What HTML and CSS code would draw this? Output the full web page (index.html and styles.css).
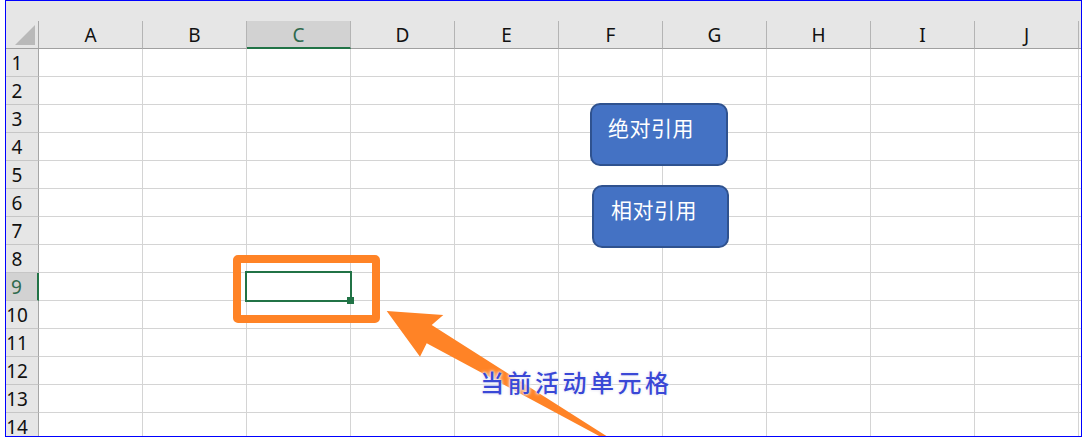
FILE: index.html
```html
<!DOCTYPE html>
<html lang="zh-CN">
<head>
<meta charset="utf-8">
<title>当前活动单元格</title>
<link rel="stylesheet" href="styles.css">
</head>
<body>
<div class="frame">
  <div class="strip"></div>
  <div class="sheet">
    <div class="corner"><svg width="32" height="27" viewBox="0 0 32 27"><polygon points="9,24 29,24 29,4" fill="#b9b9b9"/></svg></div>
    <div class="ch">A</div><div class="ch">B</div><div class="ch sel">C</div><div class="ch">D</div><div class="ch">E</div><div class="ch">F</div><div class="ch">G</div><div class="ch">H</div><div class="ch">I</div><div class="ch">J</div><div class="ch edge"></div>

    <div class="rh">1</div><div class="c"></div><div class="c"></div><div class="c"></div><div class="c"></div><div class="c"></div><div class="c"></div><div class="c"></div><div class="c"></div><div class="c"></div><div class="c"></div><div class="e"></div>
    <div class="rh">2</div><div class="c"></div><div class="c"></div><div class="c"></div><div class="c"></div><div class="c"></div><div class="c"></div><div class="c"></div><div class="c"></div><div class="c"></div><div class="c"></div><div class="e"></div>
    <div class="rh">3</div><div class="c"></div><div class="c"></div><div class="c"></div><div class="c"></div><div class="c"></div><div class="c"></div><div class="c"></div><div class="c"></div><div class="c"></div><div class="c"></div><div class="e"></div>
    <div class="rh">4</div><div class="c"></div><div class="c"></div><div class="c"></div><div class="c"></div><div class="c"></div><div class="c"></div><div class="c"></div><div class="c"></div><div class="c"></div><div class="c"></div><div class="e"></div>
    <div class="rh">5</div><div class="c"></div><div class="c"></div><div class="c"></div><div class="c"></div><div class="c"></div><div class="c"></div><div class="c"></div><div class="c"></div><div class="c"></div><div class="c"></div><div class="e"></div>
    <div class="rh">6</div><div class="c"></div><div class="c"></div><div class="c"></div><div class="c"></div><div class="c"></div><div class="c"></div><div class="c"></div><div class="c"></div><div class="c"></div><div class="c"></div><div class="e"></div>
    <div class="rh">7</div><div class="c"></div><div class="c"></div><div class="c"></div><div class="c"></div><div class="c"></div><div class="c"></div><div class="c"></div><div class="c"></div><div class="c"></div><div class="c"></div><div class="e"></div>
    <div class="rh">8</div><div class="c"></div><div class="c"></div><div class="c"></div><div class="c"></div><div class="c"></div><div class="c"></div><div class="c"></div><div class="c"></div><div class="c"></div><div class="c"></div><div class="e"></div>
    <div class="rh sel">9</div><div class="c"></div><div class="c"></div><div class="c"></div><div class="c"></div><div class="c"></div><div class="c"></div><div class="c"></div><div class="c"></div><div class="c"></div><div class="c"></div><div class="e"></div>
    <div class="rh">10</div><div class="c"></div><div class="c"></div><div class="c"></div><div class="c"></div><div class="c"></div><div class="c"></div><div class="c"></div><div class="c"></div><div class="c"></div><div class="c"></div><div class="e"></div>
    <div class="rh">11</div><div class="c"></div><div class="c"></div><div class="c"></div><div class="c"></div><div class="c"></div><div class="c"></div><div class="c"></div><div class="c"></div><div class="c"></div><div class="c"></div><div class="e"></div>
    <div class="rh">12</div><div class="c"></div><div class="c"></div><div class="c"></div><div class="c"></div><div class="c"></div><div class="c"></div><div class="c"></div><div class="c"></div><div class="c"></div><div class="c"></div><div class="e"></div>
    <div class="rh">13</div><div class="c"></div><div class="c"></div><div class="c"></div><div class="c"></div><div class="c"></div><div class="c"></div><div class="c"></div><div class="c"></div><div class="c"></div><div class="c"></div><div class="e"></div>
    <div class="rh">14</div><div class="c"></div><div class="c"></div><div class="c"></div><div class="c"></div><div class="c"></div><div class="c"></div><div class="c"></div><div class="c"></div><div class="c"></div><div class="c"></div><div class="e"></div>
  </div>

  <div class="active"></div>
  <div class="handle"></div>
  <div class="highlight"></div>

  <div class="shape shape-abs">绝对引用</div>
  <div class="shape shape-rel">相对引用</div>

  <svg class="arrow" width="1091" height="442" viewBox="0 0 1091 442">
    <polygon points="386.7,311 443.3,315 431.7,325 608,437 601,437 426.7,343.3 420,356.7" fill="#ff8326"/>
  </svg>

  <div class="label">当前活动单元格</div>
</div>
</body>
</html>
```

FILE: styles.css
```css
* { box-sizing: border-box; }
html, body { margin: 0; padding: 0; background: #ffffff; }
body { font-family: "Noto Sans", "Liberation Sans", sans-serif; }

.frame {
  position: relative;
  margin-left: 5px;
  width: 1077px;
  height: 437px;
  border: 1px solid #0000ff;
  overflow: hidden;
  background: #ffffff;
}

.strip { height: 20px; background: #e6e6e6; }

.sheet {
  display: grid;
  grid-template-columns: 33px repeat(10, 104px) 2px;
  grid-auto-rows: 28px;
}

.corner {
  background: #e6e6e6;
  border-right: 1px solid #a6a6a6;
  border-bottom: 1px solid #a0a0a0;
  line-height: 0;
}

.ch {
  background: #e6e6e6;
  border-right: 1px solid #b4b4b4;
  border-bottom: 1px solid #a0a0a0;
  text-align: center;
  font-size: 19px;
  line-height: 26px;
  padding-top: 1px;
  color: #111;
}
.ch.sel {
  background: #d2d2d2;
  border-bottom: 2px solid #217346;
  color: #2f6a4e;
}
.ch.edge { border-right: none; }

.rh {
  background: #e6e6e6;
  border-right: 1px solid #a6a6a6;
  border-bottom: 1px solid #c6c6c6;
  text-align: center;
  padding-right: 10px;
  padding-top: 1px;
  font-size: 19px;
  line-height: 26px;
  color: #111;
  white-space: nowrap;
}
.rh.sel {
  background: #d2d2d2;
  border-right: 2px solid #217346;
  color: #2f6a4e;
}

.c {
  border-right: 1px solid #d4d4d4;
  border-bottom: 1px solid #d4d4d4;
}
.e { border-bottom: 1px solid #d4d4d4; }

.active {
  position: absolute;
  left: 239px;
  top: 270px;
  width: 107px;
  height: 31px;
  border: 2px solid #217346;
}
.handle {
  position: absolute;
  left: 341px;
  top: 296px;
  width: 7px;
  height: 7px;
  background: #217346;
}
.highlight {
  position: absolute;
  left: 227px;
  top: 254px;
  width: 147px;
  height: 68px;
  border: 8px solid #ff8326;
  border-radius: 5px;
}

.shape {
  position: absolute;
  height: 63px;
  background: #4472c4;
  border: 2px solid #2f528f;
  border-radius: 10px;
  color: #ffffff;
  font-family: "Noto Sans CJK SC", sans-serif;
  font-size: 21px;
  letter-spacing: 0.5px;
  line-height: 24px;
  padding: 10px 0 0 16px;
}
.shape-abs { left: 584px; top: 102px; width: 138px; }
.shape-rel { left: 586px; top: 184px; width: 137px; padding-left: 17px; }

.arrow {
  position: absolute;
  left: -6px;
  top: -1px;
}

.label {
  position: absolute;
  left: 474px;
  top: 366px;
  font-family: "Noto Sans CJK SC", sans-serif;
  font-size: 24px;
  font-weight: 500;
  line-height: 30px;
  letter-spacing: 3.5px;
  color: #3a48d6;
  text-shadow: 0 0 2px #ffffff, 0 0 3px #d0d0ea, 0 0 4px #ffffff;
  white-space: nowrap;
}
```
